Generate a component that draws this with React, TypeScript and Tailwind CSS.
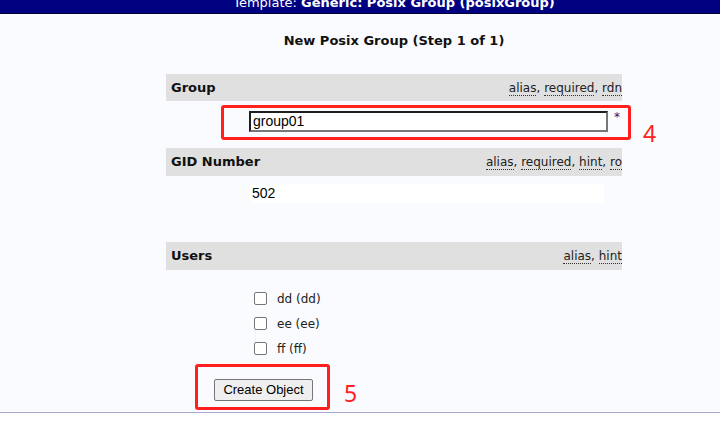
import React from "react";

const verdana = { fontFamily: '"DejaVu Sans", Verdana, sans-serif' };
const arial = { fontFamily: '"Liberation Sans", Arial, sans-serif' };

function Abbr({ children }: { children: React.ReactNode }) {
  return (
    <span className="border-b border-dotted border-[#333] leading-[13px]">{children}</span>
  );
}

function Header({ label, tags, h }: { label: string; tags: string[]; h: string }) {
  return (
    <div className={`flex items-center justify-between bg-[#e0e0e0] pl-[5px] ${h}`}>
      <span className="text-[13px] font-bold text-[#111]">{label}</span>
      <span className="text-[12px] text-[#222] whitespace-nowrap">
        {tags.map((t, i) => (
          <React.Fragment key={t}>
            <Abbr>{t}</Abbr>
            {i < tags.length - 1 ? ", " : ""}
          </React.Fragment>
        ))}
      </span>
    </div>
  );
}

function Check({ label }: { label: string }) {
  return (
    <div className="flex h-[25px] items-center pl-[88px]">
      <span className="h-[13px] w-[13px] rounded-[2px] border border-[#767676] bg-white" />
      <span className="ml-[10px] text-[12px] text-[#222]" style={verdana}>{label}</span>
    </div>
  );
}

export default function App() {
  return (
    <div className="relative flex h-[423px] w-[720px] flex-col overflow-hidden bg-[#fafbfe]" style={verdana}>
      <div className="h-[14px] overflow-hidden border-b border-[#00003a] bg-[#000080]">
        <div className="mt-[-5px] w-[788px] text-center text-[13px] leading-[16px] text-white">
          Template: <span className="font-bold">Generic: Posix Group (posixGroup)</span>
        </div>
      </div>
      <div className="mt-[19px] w-[788px] text-center text-[13px] font-bold leading-[16px] text-[#111]">
        New Posix Group (Step 1 of 1)
      </div>
      <div className="ml-[166px] mt-[25px] w-[456px] overflow-hidden">
        <Header label="Group" tags={["alias", "required", "rdn"]} h="h-[27px]" />
        <div className="flex h-[47px] items-start pl-[83px] pt-[10px]">
          <div
            className="flex h-[21px] w-[359px] items-center border-2 border-b-[#777] border-l-[#1e1e1e] border-r-[#777] border-t-[#1e1e1e] bg-white pl-[2px] text-[14px] text-black"
            style={arial}
          >
            group01
          </div>
          <span className="ml-[6px] mt-[-3px] text-[12px] text-[#202080]">*</span>
        </div>
        <Header label="GID Number" tags={["alias", "required", "hint", "ro"]} h="h-[28px]" />
        <div className="h-[66px] pl-[84px] pt-[8px]">
          <div className="flex h-[19px] w-[354px] items-center bg-white pl-[2px] text-[14px] text-black" style={arial}>
            502
          </div>
        </div>
        <Header label="Users" tags={["alias", "hint"]} h="h-[28px]" />
        <div className="pt-[16px]">
          <Check label="dd (dd)" />
          <Check label="ee (ee)" />
          <Check label="ff (ff)" />
        </div>
        <div className="mt-[18px] pl-[48px]">
          <button
            className="flex h-[22px] w-[99px] items-center justify-center rounded-[2px] border border-[#767676] bg-[#efefef] text-[13px] text-black"
            style={arial}
          >
            Create Object
          </button>
        </div>
      </div>
      <div className="mt-[11px] h-px w-full bg-[#a9a8d2]" />
      <div className="flex-1 bg-white" />

      <div className="absolute left-[221px] top-[105px] h-[35px] w-[410px] rounded-[3px] border-[3px] border-[#ff1f1f]" />
      <div className="absolute left-[643px] top-[119px] text-[23px] leading-[28px] text-[#ff2020]" style={{ fontFamily: '"Noto Sans", sans-serif' }}>4</div>
      <div className="absolute left-[195px] top-[364px] h-[46px] w-[135px] rounded-[3px] border-[3px] border-[#ff1f1f]" />
      <div className="absolute left-[344px] top-[379px] text-[23px] leading-[28px] text-[#ff2020]" style={{ fontFamily: '"Noto Sans", sans-serif' }}>5</div>
    </div>
  );
}
